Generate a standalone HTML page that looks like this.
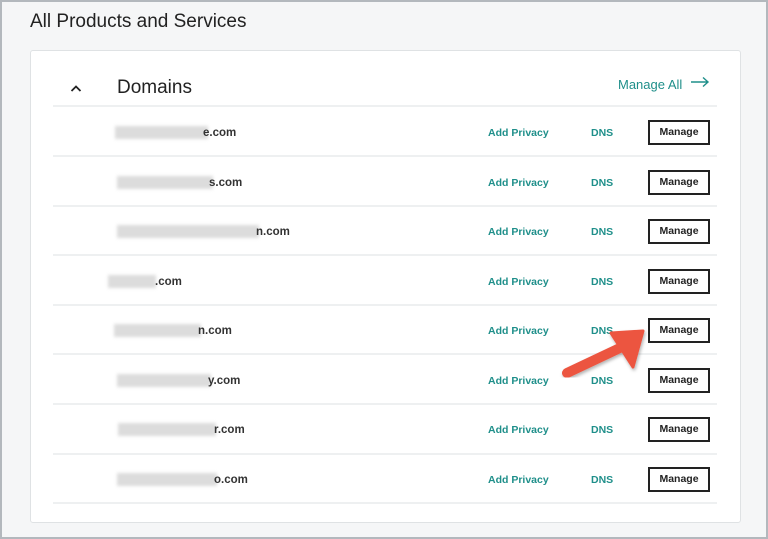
<!DOCTYPE html>
<html><head><meta charset="utf-8"><style>
*{margin:0;padding:0;box-sizing:border-box}
body{width:768px;height:539px;overflow:hidden;background:#f5f6f7;font-family:"Liberation Sans",sans-serif;position:relative}
.frame{position:absolute;inset:0;border:2px solid #b3b8bd}
h1{position:absolute;left:30px;top:11px;font-size:19px;font-weight:normal;color:#222}
.card{position:absolute;left:30px;top:50px;width:711px;height:473px;background:#fff;border:1px solid #dfe2e4;border-radius:3px}
.chev{position:absolute;left:70px;top:83px}
.dom{position:absolute;left:117px;top:77px;font-size:19px;color:#222}
.ma{position:absolute;left:618px;top:76px;font-size:13px;color:#1f8f8a}
.sep{position:absolute;left:53px;width:664px;height:2px;background:#eef0f1}
.row{position:absolute;left:0;width:768px;height:20px}
.blk{position:absolute;top:4px;height:13px;background:#dcdcdc;filter:blur(1.5px)}
.com{position:absolute;top:5px;font-size:11.5px;font-weight:bold;color:#333}
.ap{position:absolute;left:488px;top:5px;font-size:10.5px;font-weight:bold;color:#1f8f8a}
.dns{position:absolute;left:591px;top:5px;font-size:10.5px;font-weight:bold;color:#1f8f8a}
.btn{position:absolute;left:648px;top:-2px;width:62px;height:25px;border:2px solid #222;font-size:10.5px;font-weight:bold;color:#222;text-align:center;line-height:21px;background:#fff}
</style></head><body>
<div class="frame"></div>
<h1>All Products and Services</h1>
<div class="card"></div>
<svg class="chev" width="12" height="10" viewBox="0 0 12 10"><path d="M1.5 8 L6 3.5 L10.5 8" fill="none" stroke="#222" stroke-width="1.8"/></svg>
<div class="dom">Domains</div>
<div class="ma">Manage All <svg width="20" height="12" viewBox="0 0 20 12" style="vertical-align:1px;margin-left:4px"><path d="M1 6H18M13 1.5L18 6L13 10.5" fill="none" stroke="#1f8f8a" stroke-width="1.4"/></svg></div>
<div class="sep" style="top:105px"></div>
<div class="sep" style="top:155px"></div>
<div class="sep" style="top:205px"></div>
<div class="sep" style="top:254px"></div>
<div class="sep" style="top:304px"></div>
<div class="sep" style="top:353px"></div>
<div class="sep" style="top:403px"></div>
<div class="sep" style="top:453px"></div>
<div class="sep" style="top:502px"></div>

<div class="row" style="top:122px"><div class="blk" style="left:115px;width:93px"></div><div class="com" style="left:203px">e.com</div><div class="ap">Add Privacy</div><div class="dns">DNS</div><div class="btn">Manage</div></div>
<div class="row" style="top:172px"><div class="blk" style="left:117px;width:96px"></div><div class="com" style="left:209px">s.com</div><div class="ap">Add Privacy</div><div class="dns">DNS</div><div class="btn">Manage</div></div>
<div class="row" style="top:221px"><div class="blk" style="left:117px;width:142px"></div><div class="com" style="left:256px">n.com</div><div class="ap">Add Privacy</div><div class="dns">DNS</div><div class="btn">Manage</div></div>
<div class="row" style="top:271px"><div class="blk" style="left:108px;width:48px"></div><div class="com" style="left:155px">.com</div><div class="ap">Add Privacy</div><div class="dns">DNS</div><div class="btn">Manage</div></div>
<div class="row" style="top:320px"><div class="blk" style="left:114px;width:87px"></div><div class="com" style="left:198px">n.com</div><div class="ap">Add Privacy</div><div class="dns">DNS</div><div class="btn">Manage</div></div>
<div class="row" style="top:370px"><div class="blk" style="left:117px;width:94px"></div><div class="com" style="left:208px">y.com</div><div class="ap">Add Privacy</div><div class="dns">DNS</div><div class="btn">Manage</div></div>
<div class="row" style="top:419px"><div class="blk" style="left:118px;width:98px"></div><div class="com" style="left:214px">r.com</div><div class="ap">Add Privacy</div><div class="dns">DNS</div><div class="btn">Manage</div></div>
<div class="row" style="top:469px"><div class="blk" style="left:117px;width:100px"></div><div class="com" style="left:214px">o.com</div><div class="ap">Add Privacy</div><div class="dns">DNS</div><div class="btn">Manage</div></div>

<svg style="position:absolute;left:0;top:0" width="768" height="539">
<defs><filter id="s"><feDropShadow dx="1" dy="2" stdDeviation="1.5" flood-opacity="0.3"/></filter></defs>
<g filter="url(#s)">
<path d="M567 373 L622 347" stroke="#ec5541" stroke-width="10" stroke-linecap="round"/>
<path d="M643 331 L611 333 L633 367 Z" fill="#ec5541" stroke="#ec5541" stroke-width="3" stroke-linejoin="round"/>
</g>
</svg>
</body></html>
